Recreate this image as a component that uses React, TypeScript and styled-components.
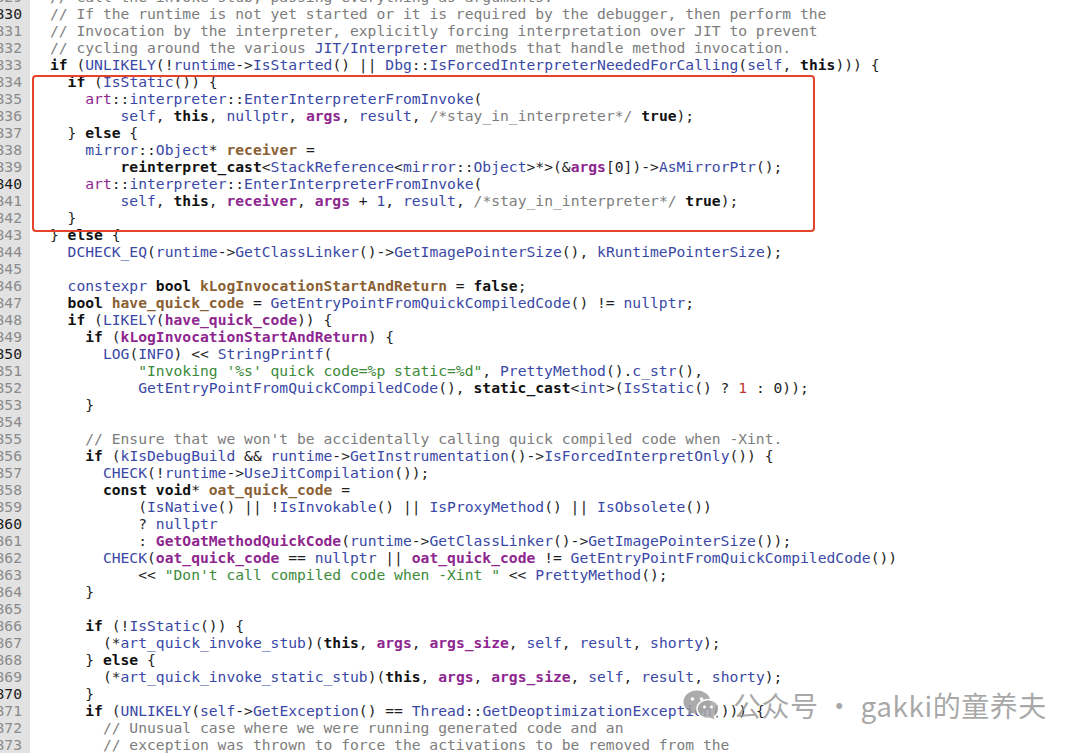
import React from "react";
import styled, { createGlobalStyle } from "styled-components";

const Global = createGlobalStyle`
  html, body { margin: 0; padding: 0; background: #ffffff; }
  body { width: 1080px; height: 753px; overflow: hidden; }
`;

const Page = styled.div`
  position: relative;
  width: 1080px;
  height: 753px;
  overflow: hidden;
  background: #ffffff;
  display: flex;
  flex-direction: row;
`;

const Gutter = styled.div`
  width: 30px;
  flex: 0 0 30px;
  background: #e2e2e2;
  padding-right: 8px;
  box-sizing: border-box;
  margin-top: -12px;
  height: 780px;
`;

const LineNo = styled.div<{ $major: boolean }>`
  display: flex;
  justify-content: flex-end;
  height: 17px;
  line-height: 17px;
  font-family: "DejaVu Sans Mono", "Liberation Mono", monospace;
  font-size: 14.67px;
  white-space: pre;
  color: ${(p) => (p.$major ? "#1a1a1a" : "#8a8a8a")};
`;

const Code = styled.div`
  flex: 1;
  padding-left: 2.3px;
  margin-top: -12px;
`;

const Line = styled.div`
  height: 17px;
  line-height: 17px;
  font-family: "DejaVu Sans Mono", "Liberation Mono", monospace;
  font-size: 14.67px;
  white-space: pre;
  color: #1f1f1f;
`;

const palette: Record<string, { color: string; bold?: boolean }> = {
  c: { color: "#7d7d7d" },
  k: { color: "#111111", bold: true },
  f: { color: "#3a48a6" },
  p: { color: "#8e2690" },
  pb: { color: "#8e2690", bold: true },
  d: { color: "#8a5f34", bold: true },
  s: { color: "#3c8a3a" },
  n: { color: "#c0352a" },
};

const Tok = styled.span<{ $c: string; $b?: boolean }>`
  color: ${(p) => p.$c};
  font-weight: ${(p) => (p.$b ? 700 : 400)};
`;

const Highlight = styled.div`
  position: absolute;
  left: 32px;
  top: 75px;
  width: 783px;
  height: 157px;
  box-sizing: border-box;
  border: 2.5px solid #e6432d;
  border-radius: 4px;
  pointer-events: none;
`;

const Watermark = styled.div`
  position: absolute;
  left: 683px;
  top: 687px;
  display: flex;
  align-items: center;
  gap: 13px;
  pointer-events: none;
`;

const WatermarkText = styled.span`
  font-family: "Noto Sans CJK SC", "Noto Sans", sans-serif;
  font-size: 28px;
  line-height: 36px;
  color: rgba(140, 140, 140, 0.75);
  letter-spacing: 0.5px;
`;

const lines: string[] = [
  "  [c:// call the invoke stub, passing everything as arguments.]",
  "  [c:// If the runtime is not yet started or it is required by the debugger, then perform the]",
  "  [c:// Invocation by the interpreter, explicitly forcing interpretation over JIT to prevent]",
  "  [c:// cycling around the various ][f:JIT/Interpreter][c: methods that handle method invocation.]",
  "  [k:if] ([f:UNLIKELY](![f:runtime]->[f:IsStarted]() || [f:Dbg]::[f:IsForcedInterpreterNeededForCalling]([f:self], [k:this]))) {",
  "    [k:if] ([f:IsStatic]()) {",
  "      [p:art]::[f:interpreter]::[f:EnterInterpreterFromInvoke](",
  "          [f:self], [k:this], [f:nullptr], [pb:args], [f:result], [c:/*stay_in_interpreter*/] [k:true]);",
  "    } [k:else] {",
  "      [f:mirror]::[f:Object]* [d:receiver] =",
  "          [k:reinterpret_cast]<[f:StackReference]<[f:mirror]::[f:Object]>*>(&[pb:args][0])->[f:AsMirrorPtr]();",
  "      [p:art]::[f:interpreter]::[f:EnterInterpreterFromInvoke](",
  "          [f:self], [k:this], [pb:receiver], [pb:args] + [f:1], [f:result], [c:/*stay_in_interpreter*/] [k:true]);",
  "    }",
  "  } [k:else] {",
  "    [f:DCHECK_EQ]([f:runtime]->[f:GetClassLinker]()->[f:GetImagePointerSize](), [f:kRuntimePointerSize]);",
  "",
  "    [f:constexpr] [k:bool] [d:kLogInvocationStartAndReturn] = [k:false];",
  "    [k:bool] [d:have_quick_code] = [f:GetEntryPointFromQuickCompiledCode]() != [f:nullptr];",
  "    [k:if] ([f:LIKELY]([pb:have_quick_code])) {",
  "      [k:if] ([pb:kLogInvocationStartAndReturn]) {",
  "        [f:LOG]([f:INFO]) << [f:StringPrintf](",
  "            [s:\"Invoking '%s' quick code=%p static=%d\"], [f:PrettyMethod]().[f:c_str](),",
  "            [f:GetEntryPointFromQuickCompiledCode](), [k:static_cast]<[f:int]>([f:IsStatic]() ? [n:1] : 0));",
  "      }",
  "",
  "      [c:// Ensure that we won't be accidentally calling quick compiled code when -Xint.]",
  "      [k:if] ([f:kIsDebugBuild] && [f:runtime]->[f:GetInstrumentation]()->[f:IsForcedInterpretOnly]()) {",
  "        [f:CHECK](![f:runtime]->[f:UseJitCompilation]());",
  "        [k:const] [k:void]* [d:oat_quick_code] =",
  "            ([f:IsNative]() || ![f:IsInvokable]() || [f:IsProxyMethod]() || [f:IsObsolete]())",
  "            ? [f:nullptr]",
  "            : [pb:GetOatMethodQuickCode]([f:runtime]->[f:GetClassLinker]()->[f:GetImagePointerSize]());",
  "        [f:CHECK]([pb:oat_quick_code] == [f:nullptr] || [pb:oat_quick_code] != [f:GetEntryPointFromQuickCompiledCode]())",
  "            << [s:\"Don't call compiled code when -Xint \"] << [f:PrettyMethod]();",
  "      }",
  "",
  "      [k:if] (![f:IsStatic]()) {",
  "        (*[f:art_quick_invoke_stub])([k:this], [pb:args], [pb:args_size], [f:self], [f:result], [f:shorty]);",
  "      } [k:else] {",
  "        (*[f:art_quick_invoke_static_stub])([k:this], [pb:args], [pb:args_size], [f:self], [f:result], [f:shorty]);",
  "      }",
  "      [k:if] ([f:UNLIKELY]([f:self]->[f:GetException]() == [f:Thread]::[f:GetDeoptimizationException]())) {",
  "        [c:// Unusual case where we were running generated code and an]",
  "        [c:// exception was thrown to force the activations to be removed from the]",
];

function renderLine(src: string, key: number) {
  const parts: React.ReactNode[] = [];
  const re = /\[(c|k|f|p|pb|d|s|n):([^\]]*)\]/g;
  let last = 0;
  let m: RegExpExecArray | null;
  let i = 0;
  while ((m = re.exec(src)) !== null) {
    if (m.index > last) parts.push(<span key={i++}>{src.slice(last, m.index)}</span>);
    const st = palette[m[1]];
    parts.push(
      <Tok key={i++} $c={st.color} $b={st.bold}>
        {m[2]}
      </Tok>
    );
    last = re.lastIndex;
  }
  if (last < src.length) parts.push(<span key={i++}>{src.slice(last)}</span>);
  return <Line key={key}>{parts.length ? parts : " "}</Line>;
}

const WeChatIcon = () => (
  <svg width="37" height="30" viewBox="0 0 37 30">
    <ellipse cx="14" cy="12" rx="13.5" ry="11.5" fill="rgba(150,150,150,0.8)" />
    <path d="M6 20 L4.5 25.5 L11 22 Z" fill="rgba(150,150,150,0.8)" />
    <ellipse cx="25" cy="19" rx="11" ry="9.5" fill="rgba(165,165,165,0.85)" stroke="#ffffff" strokeWidth="1.5" />
    <path d="M30 26 L32 29.5 L26.5 27.5 Z" fill="rgba(165,165,165,0.85)" />
    <circle cx="9.5" cy="9" r="1.8" fill="#ffffff" />
    <circle cx="18.5" cy="9" r="1.8" fill="#ffffff" />
    <circle cx="21.5" cy="17" r="1.4" fill="#ffffff" />
    <circle cx="28.5" cy="17" r="1.4" fill="#ffffff" />
  </svg>
);

export default function App() {
  const first = 829;
  return (
    <>
      <Global />
      <Page>
        <Gutter>
          {lines.map((_, idx) => {
            const n = first + idx;
            return (
              <LineNo key={n} $major={n % 10 === 0}>
                {String(n)}
              </LineNo>
            );
          })}
        </Gutter>
        <Code>{lines.map((l, idx) => renderLine(l, idx))}</Code>
        <Highlight />
        <Watermark>
          <WeChatIcon />
          <WatermarkText>公众号 · gakki的童养夫</WatermarkText>
        </Watermark>
      </Page>
    </>
  );
}
